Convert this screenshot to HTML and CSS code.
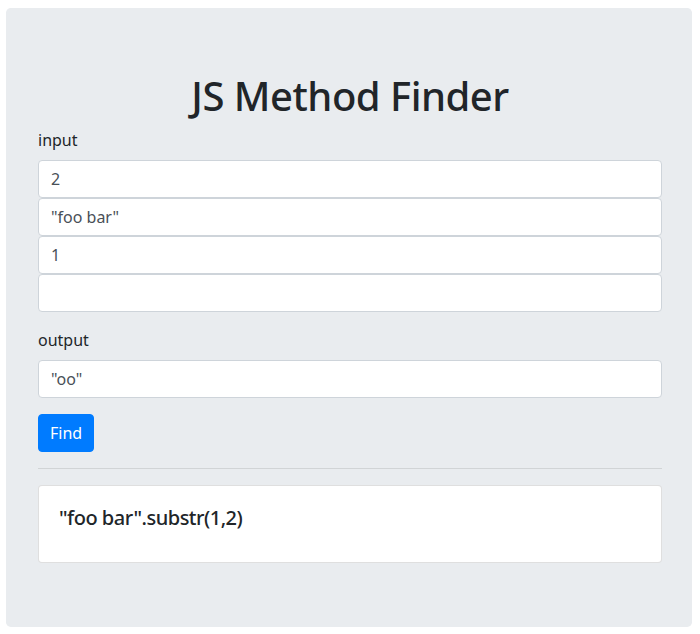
FILE: index.html
```html
<!DOCTYPE html>
<html lang="en">
<head>
<meta charset="utf-8">
<title>JS Method Finder</title>
<link rel="stylesheet" href="styles.css">
</head>
<body>
<div class="jumbotron">
  <h1 class="title">JS Method Finder</h1>
  <div class="form-group">
    <label class="label">input</label>
    <div class="inputs">
      <input class="form-control" type="text" value="2">
      <input class="form-control" type="text" value="&quot;foo bar&quot;">
      <input class="form-control" type="text" value="1">
      <input class="form-control" type="text" value="">
    </div>
  </div>
  <div class="form-group">
    <label class="label">output</label>
    <input class="form-control" type="text" value="&quot;oo&quot;">
  </div>
  <button class="btn" type="button">Find</button>
  <hr class="divider">
  <div class="card">
    <div class="card-body">
      <h5 class="result">"foo bar".substr(1,2)</h5>
    </div>
  </div>
</div>
</body>
</html>
```
FILE: styles.css
```css
* { box-sizing: border-box; }
html, body { margin: 0; padding: 0; }
body {
  font-family: "Noto Sans", "Open Sans", sans-serif;
  font-size: 16px;
  line-height: 1.5;
  color: #212529;
  background: #fff;
}
.jumbotron {
  margin: 8px 8px 8px 6px;
  width: 686px;
  padding: 64px 30px 64px 32px;
  background: #e9ecef;
  border-radius: 4.8px;
}
.title {
  margin: 0 0 8px;
  font-size: 40px;
  font-weight: 500;
  line-height: 1.2;
  letter-spacing: -0.5px;
  text-align: center;
}
.form-group { margin-bottom: 16px; }
.label { display: inline-block; margin-bottom: 8px; }
.inputs { display: flex; flex-direction: column; }
.form-control {
  display: block;
  width: 100%;
  height: 38px;
  padding: 6px 12px;
  font-family: inherit;
  font-size: 16px;
  line-height: 1.5;
  color: #495057;
  background: #fff;
  border: 1px solid #ced4da;
  border-radius: 4px;
  margin: 0;
}
.btn {
  display: inline-block;
  height: 38px;
  padding: 6px 11px;
  font-family: inherit;
  font-size: 16px;
  line-height: 1.5;
  color: #fff;
  background: #007bff;
  border: 1px solid #007bff;
  border-radius: 4px;
}
.divider {
  margin: 16px 0;
  border: 0;
  border-top: 1px solid rgba(0,0,0,.1);
  height: 0;
}
.card {
  background: #fff;
  border: 1px solid rgba(0,0,0,.125);
  border-radius: 4px;
}
.card-body { padding: 20px; }
.result {
  margin: 0 0 12px;
  font-size: 20px;
  font-weight: 500;
  line-height: 1.2;
  letter-spacing: -0.5px;
}
```
